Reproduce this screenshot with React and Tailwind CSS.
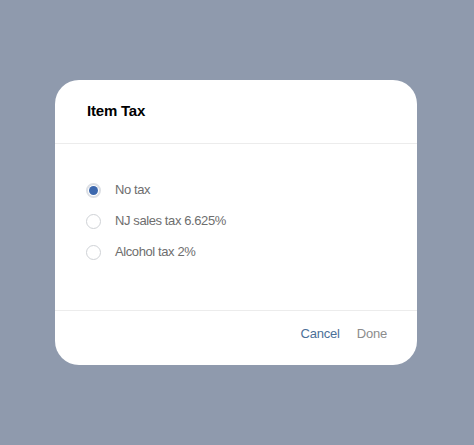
export default function App() {
  const options = ['No tax', 'NJ sales tax 6.625%', 'Alcohol tax 2%']
  const selected = 0

  return (
    <div className="w-[474px] h-[445px] bg-[#8f9aad] pt-[80px] pl-[55px] font-['Liberation_Sans',Arial,sans-serif]">
      <div className="w-[362px] h-[285px] bg-white rounded-[24px] flex flex-col">
        <div className="h-[64px] flex items-center pl-[32px] border-b border-[#ececec]">
          <h2 className="text-[15px] font-bold text-black tracking-[-0.2px]">Item Tax</h2>
        </div>
        <div className="flex-1 flex flex-col gap-[9px] pt-[35px] pl-[31px]">
          {options.map((label, i) => (
            <div key={label} className="h-[22px] flex items-center gap-[14px]">
              {i === selected ? (
                <span className="w-[15px] h-[15px] rounded-full border-[2px] border-[#dcdfe4] flex items-center justify-center">
                  <span className="w-[9px] h-[9px] rounded-full bg-[#3c68ae]" />
                </span>
              ) : (
                <span className="w-[15px] h-[15px] rounded-full border border-[#cfd2d6]" />
              )}
              <span className="text-[13px] tracking-[-0.4px] text-[#6e6e6e]">{label}</span>
            </div>
          ))}
        </div>
        <div className="h-[55px] border-t border-[#ececec] flex items-center justify-end gap-[17px] pr-[30px] pb-[8px]">
          <button className="text-[13px] tracking-[-0.2px] text-[#4b6f98]">Cancel</button>
          <button className="text-[13px] tracking-[-0.2px] text-[#8c8c8c]">Done</button>
        </div>
      </div>
    </div>
  )
}
